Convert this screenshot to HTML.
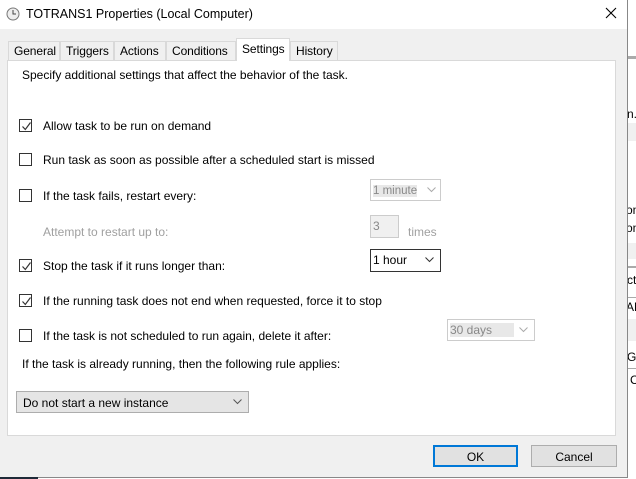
<!DOCTYPE html>
<html><head><style>
*{margin:0;padding:0;box-sizing:border-box}
body{width:636px;height:479px;overflow:hidden;background:#fff;font-family:"Liberation Sans",sans-serif;font-size:12px;color:#000;position:relative}
.a{position:absolute;white-space:nowrap}
.cb{position:absolute;width:13px;height:13px;border:1px solid #333;background:#fff}
.cb svg{position:absolute;left:1px;top:1px}
.dd{position:absolute;border:1px solid #adadad;background:#e5e5e5;height:22px;padding:3px 0 0 4px}
.dd.dis{border-color:#ccc;background:#fff;color:#888}
.dd .ar{position:absolute;right:6px;top:7px}
.tab{position:absolute;top:41px;height:19px;background:#f0f0f0;border:1px solid #d9d9d9;border-bottom:none;padding:2px 0 0 5px;letter-spacing:-0.1px}
.g{color:#a0a0a0}
</style></head><body>
<div class="a" style="left:628px;top:0;width:8px;height:479px;background:#fff"></div>
<div class="a" style="left:628px;top:56px;width:8px;height:3px;background:#aaa"></div>
<div class="a" style="left:627px;top:107px;font-size:12px">n.</div>
<div class="a" style="left:628px;top:123px;width:8px;height:18px;background:#f0f0f0"></div>
<div class="a" style="left:626px;top:203px">on</div>
<div class="a" style="left:626px;top:221px">on</div>
<div class="a" style="left:628px;top:243px;width:8px;height:16px;background:#f0f0f0"></div>
<div class="a" style="left:628px;top:266px;width:8px;height:2px;background:#aaa"></div>
<div class="a" style="left:627px;top:273px">ct</div>
<div class="a" style="left:628px;top:297px;width:8px;height:1px;background:#aaa"></div>
<div class="a" style="left:626px;top:300px">AN</div>
<div class="a" style="left:628px;top:319px;width:8px;height:22px;background:#f0f0f0"></div>
<div class="a" style="left:627px;top:350px">G</div>
<div class="a" style="left:628px;top:368px;width:8px;height:1px;background:#aaa"></div>
<div class="a" style="left:630px;top:373px">C</div>
<div class="a" style="left:0;top:0;width:628px;height:478px;background:#f0f0f0;border-right:1px solid #888;border-bottom:1px solid #888"></div>
<div class="a" style="left:0;top:0;width:627px;height:29px;background:#fff"></div>
<svg class="a" style="left:6px;top:7px" width="14" height="14" viewBox="0 0 14 14"><circle cx="7" cy="7" r="6" fill="#eee" stroke="#777"/><path d="M7 3V7H10" stroke="#444" fill="none"/></svg>
<div class="a" style="left:26px;top:7px;font-size:12.5px">TOTRANS1 Properties (Local Computer)</div>
<svg class="a" style="left:605px;top:7px" width="12" height="12"><path d="M1 1L11 11M11 1L1 11" stroke="#000" stroke-width="1.1"/></svg>
<div class="tab" style="left:8px;width:52px">General</div>
<div class="tab" style="left:60px;width:54px">Triggers</div>
<div class="tab" style="left:114px;width:52px">Actions</div>
<div class="tab" style="left:166px;width:70px">Conditions</div>
<div class="tab" style="left:290px;width:48px">History</div>
<div class="a" style="left:7px;top:60px;width:609px;height:376px;background:#fff;border:1px solid #d9d9d9"></div>
<div class="tab" style="left:236px;top:38px;height:23px;width:54px;background:#fff;padding-top:3px">Settings</div>
<div class="a" style="left:22px;top:68px">Specify additional settings that affect the behavior of the task.</div>
<div class="cb" style="left:19px;top:119px"><svg width="11" height="11"><path d="M1.5 5.5L4.3 8.5L9.5 1.5" stroke="#333" fill="none" stroke-width="1.2"/></svg></div>
<div class="a" style="left:43px;top:119px">Allow task to be run on demand</div>
<div class="cb" style="left:19px;top:153px"></div>
<div class="a" style="left:43px;top:153px">Run task as soon as possible after a scheduled start is missed</div>
<div class="cb" style="left:19px;top:189px"></div>
<div class="a" style="left:43px;top:189px">If the task fails, restart every:</div>
<div class="dd dis" style="left:370px;top:179px;width:71px;padding-left:2px"><span style="background:#e8e8e8;color:#888;font-size:11.5px">1 minute</span><svg class="ar" width="9" height="6" style="right:4px"><path d="M0.5 0.5L4.5 4.5L8.5 0.5" stroke="#aaa" fill="none"/></svg></div>
<div class="a g" style="left:43px;top:225px">Attempt to restart up to:</div>
<div class="a" style="left:370px;top:215px;width:29px;height:23px;border:1px solid #ccc;background:#f0f0f0;color:#888;padding:3px 0 0 2px">3</div>
<div class="a g" style="left:408px;top:225px">times</div>
<div class="cb" style="left:19px;top:259px"><svg width="11" height="11"><path d="M1.5 5.5L4.3 8.5L9.5 1.5" stroke="#333" fill="none" stroke-width="1.2"/></svg></div>
<div class="a" style="left:43px;top:259px">Stop the task if it runs longer than:</div>
<div class="dd" style="left:370px;top:249px;width:71px;height:23px;border-color:#333;background:#fff;padding-left:2px"><span>1 hour</span><svg class="ar" width="9" height="6"><path d="M0.5 0.5L4.5 4.5L8.5 0.5" stroke="#333" fill="none"/></svg></div>
<div class="cb" style="left:19px;top:294px"><svg width="11" height="11"><path d="M1.5 5.5L4.3 8.5L9.5 1.5" stroke="#333" fill="none" stroke-width="1.2"/></svg></div>
<div class="a" style="left:43px;top:294px">If the running task does not end when requested, force it to stop</div>
<div class="cb" style="left:19px;top:329px"></div>
<div class="a" style="left:43px;top:329px">If the task is not scheduled to run again, delete it after:</div>
<div class="dd dis" style="left:447px;top:319px;width:88px;padding-left:2px"><span style="background:#e8e8e8;color:#888;padding-right:22px">30 days</span><svg class="ar" width="9" height="6"><path d="M0.5 0.5L4.5 4.5L8.5 0.5" stroke="#aaa" fill="none"/></svg></div>
<div class="a" style="left:22px;top:357px">If the task is already running, then the following rule applies:</div>
<div class="dd" style="left:16px;top:391px;width:233px;padding-left:6px;padding-top:4px">Do not start a new instance<svg class="ar" width="9" height="6"><path d="M0.5 0.5L4.5 4.5L8.5 0.5" stroke="#555" fill="none"/></svg></div>
<div class="a" style="left:433px;top:445px;width:85px;height:22px;border:2px solid #0078d7;background:#e1e1e1;text-align:center;padding-top:3px">OK</div>
<div class="a" style="left:531px;top:445px;width:86px;height:22px;border:1px solid #adadad;background:#e1e1e1;text-align:center;padding-top:4px">Cancel</div>
<div class="a" style="left:0;top:477px;width:38px;height:2px;background:#1e2a38"></div>
</body></html>
